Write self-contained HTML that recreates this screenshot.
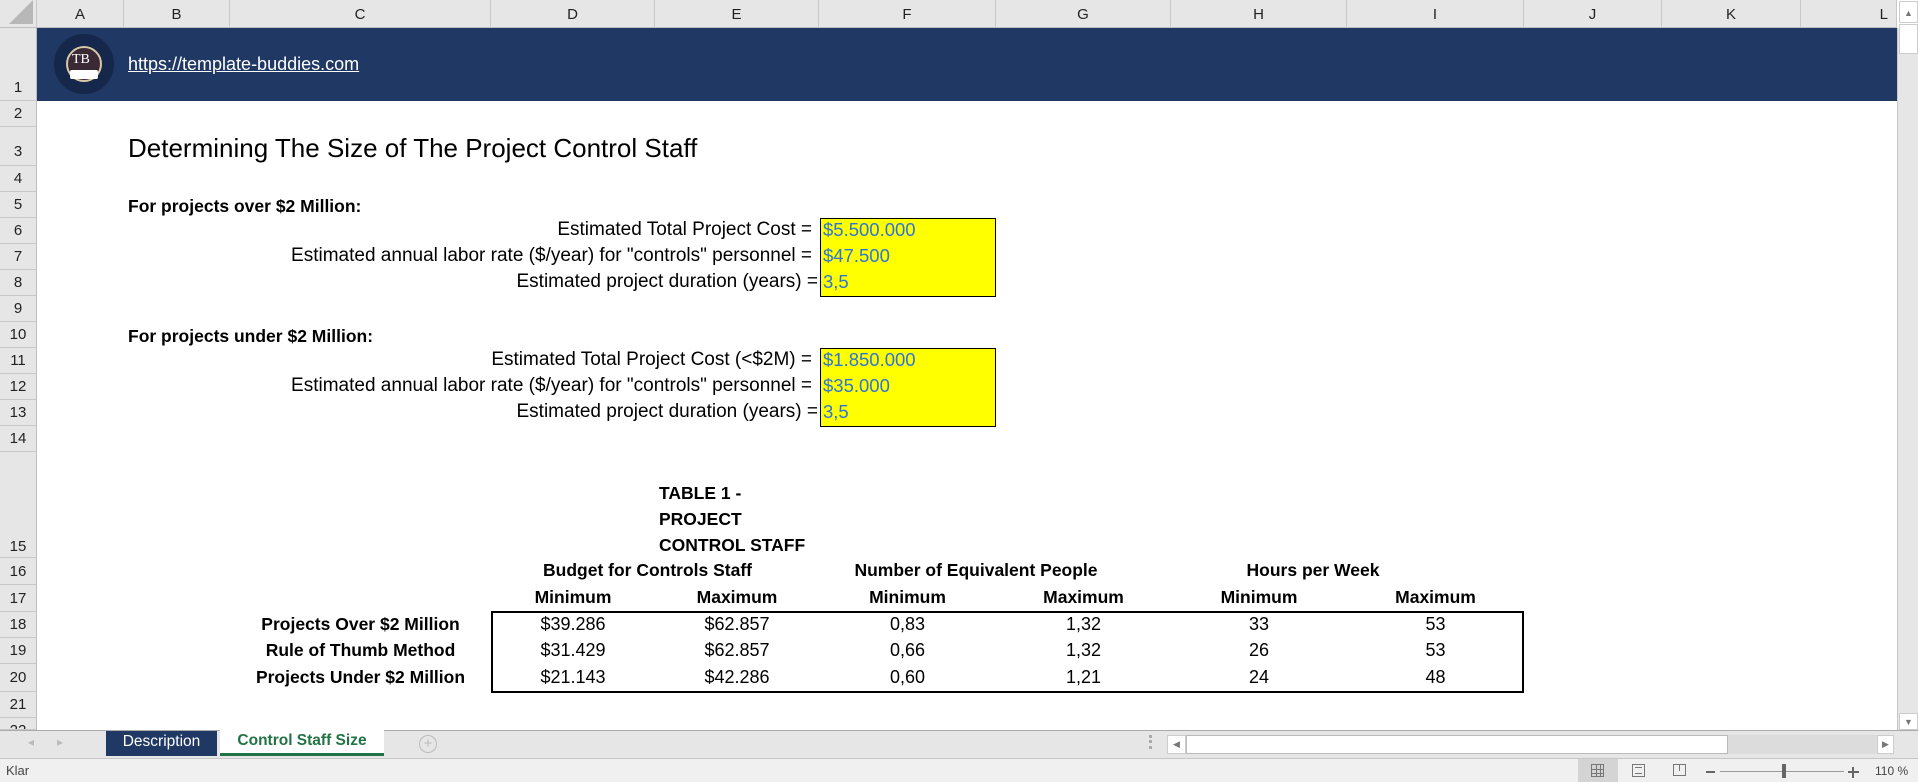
<!DOCTYPE html>
<html><head><meta charset="utf-8"><style>
*{margin:0;padding:0;box-sizing:border-box}
body{width:1918px;height:782px;overflow:hidden;background:#fff;font-family:"Liberation Sans",Arial,sans-serif;position:relative;color:#000}
.a{position:absolute;white-space:nowrap}
.ch{position:absolute;top:0;height:28px;background:#e6e6e6;border-right:1px solid #c8c8c8;border-bottom:1px solid #bdbdbd;font-size:15px;text-align:center;line-height:30px;color:#222}
.rh{position:absolute;left:0;width:37px;background:#e6e6e6;border-bottom:1px solid #c8c8c8;border-right:1px solid #bdbdbd;font-size:15px;text-align:center;color:#222}
.t{font-size:19px;line-height:26px;height:26px}
.r{text-align:right}
.b{font-weight:bold;font-size:17.5px}
.c{text-align:center;position:absolute;white-space:nowrap;font-size:18px;line-height:26px;height:26px}
.c.b{font-size:17.5px}
.v{color:#2f75d6;font-size:18.5px;line-height:26px}
</style></head><body>
<div class="ch" style="left:0;width:37px"><div style="position:absolute;right:3px;bottom:3px;width:0;height:0;border-left:24px solid transparent;border-bottom:24px solid #b8b8b8"></div></div>
<div class="ch" style="left:37px;width:87px">A</div>
<div class="ch" style="left:124px;width:106px">B</div>
<div class="ch" style="left:230px;width:261px">C</div>
<div class="ch" style="left:491px;width:164px">D</div>
<div class="ch" style="left:655px;width:164px">E</div>
<div class="ch" style="left:819px;width:177px">F</div>
<div class="ch" style="left:996px;width:175px">G</div>
<div class="ch" style="left:1171px;width:176px">H</div>
<div class="ch" style="left:1347px;width:177px">I</div>
<div class="ch" style="left:1524px;width:138px">J</div>
<div class="ch" style="left:1662px;width:139px">K</div>
<div class="ch" style="left:1801px;width:96px;text-align:right;padding-right:8px">L</div>
<div class="rh" style="top:28px;height:73px;line-height:120px">1</div>
<div class="rh" style="top:101px;height:26px;line-height:26px">2</div>
<div class="rh" style="top:127px;height:39px;line-height:50px">3</div>
<div class="rh" style="top:166px;height:26px;line-height:26px">4</div>
<div class="rh" style="top:192px;height:26px;line-height:26px">5</div>
<div class="rh" style="top:218px;height:26px;line-height:26px">6</div>
<div class="rh" style="top:244px;height:26px;line-height:26px">7</div>
<div class="rh" style="top:270px;height:26px;line-height:26px">8</div>
<div class="rh" style="top:296px;height:26px;line-height:26px">9</div>
<div class="rh" style="top:322px;height:26px;line-height:26px">10</div>
<div class="rh" style="top:348px;height:26px;line-height:26px">11</div>
<div class="rh" style="top:374px;height:26px;line-height:26px">12</div>
<div class="rh" style="top:400px;height:26px;line-height:26px">13</div>
<div class="rh" style="top:426px;height:26px;line-height:26px">14</div>
<div class="rh" style="top:452px;height:106px;line-height:190px">15</div>
<div class="rh" style="top:558px;height:27px;line-height:27px">16</div>
<div class="rh" style="top:585px;height:27px;line-height:27px">17</div>
<div class="rh" style="top:612px;height:26px;line-height:26px">18</div>
<div class="rh" style="top:638px;height:26px;line-height:26px">19</div>
<div class="rh" style="top:664px;height:28px;line-height:28px">20</div>
<div class="rh" style="top:692px;height:26px;line-height:26px">21</div>
<div class="rh" style="top:718px;height:12px;line-height:26px;overflow:hidden">22</div>
<div class="a" style="left:37px;top:28px;width:1860px;height:73px;background:#203864"></div>
<div class="a" style="left:54px;top:34px;width:60px;height:60px;border-radius:50%;background:#15274a"></div>
<div class="a" style="left:66px;top:46px;width:36px;height:36px;border-radius:50%;background:#3a2a35;border:2px solid #d8c8a8"></div>
<div class="a" style="left:72px;top:52px;color:#fff;font-size:14px;font-family:'Liberation Serif',serif">TB</div>
<div class="a" style="left:70px;top:70px;width:28px;height:9px;background:#fff;border-radius:2px"></div>
<div class="a" style="left:128px;top:54px;color:#fff;font-size:18px;text-decoration:underline">https://template-buddies.com</div>
<div class="a" style="left:128px;top:133px;font-size:26px">Determining The Size of The Project Control Staff</div>
<div class="a t b" style="left:128px;top:193px">For projects over $2 Million:</div>
<div class="a t b" style="left:128px;top:323px">For projects under $2 Million:</div>
<div class="a t r" style="right:1106px;top:217px">Estimated Total Project Cost =</div>
<div class="a t r" style="right:1106px;top:243px">Estimated annual labor rate ($/year) for "controls" personnel =</div>
<div class="a t r" style="right:1100px;top:269px">Estimated project duration (years) =</div>
<div class="a t r" style="right:1106px;top:347px">Estimated Total Project Cost (&lt;$2M) =</div>
<div class="a t r" style="right:1106px;top:373px">Estimated annual labor rate ($/year) for "controls" personnel =</div>
<div class="a t r" style="right:1100px;top:399px">Estimated project duration (years) =</div>
<div class="a" style="left:820px;top:218px;width:176px;height:79px;background:#ffff00;border:1px solid #000"></div>
<div class="a" style="left:820px;top:348px;width:176px;height:79px;background:#ffff00;border:1px solid #000"></div>
<div class="a v" style="left:823px;top:217px">$5.500.000</div>
<div class="a v" style="left:823px;top:243px">$47.500</div>
<div class="a v" style="left:823px;top:269px">3,5</div>
<div class="a v" style="left:823px;top:347px">$1.850.000</div>
<div class="a v" style="left:823px;top:373px">$35.000</div>
<div class="a v" style="left:823px;top:399px">3,5</div>
<div class="a b" style="left:659px;top:480px;line-height:26px">TABLE 1 -<br>PROJECT<br>CONTROL STAFF</div>
<div class="c b" style="left:543px;width:200px;top:557px">Budget for Controls Staff</div>
<div class="c b" style="left:826px;width:300px;top:557px">Number of Equivalent People</div>
<div class="c b" style="left:1213px;width:200px;top:557px">Hours per Week</div>
<div class="c b" style="left:491px;width:164px;top:584px">Minimum</div>
<div class="c b" style="left:655px;width:164px;top:584px">Maximum</div>
<div class="c b" style="left:819px;width:177px;top:584px">Minimum</div>
<div class="c b" style="left:996px;width:175px;top:584px">Maximum</div>
<div class="c b" style="left:1171px;width:176px;top:584px">Minimum</div>
<div class="c b" style="left:1347px;width:177px;top:584px">Maximum</div>
<div class="c b" style="left:230px;width:261px;top:611px">Projects Over $2 Million</div>
<div class="c b" style="left:230px;width:261px;top:637px">Rule of Thumb Method</div>
<div class="c b" style="left:230px;width:261px;top:664px">Projects Under $2 Million</div>
<div class="a" style="left:491px;top:611px;width:1033px;height:82px;border:2px solid #000"></div>
<div class="c" style="left:491px;width:164px;top:611px">$39.286</div>
<div class="c" style="left:655px;width:164px;top:611px">$62.857</div>
<div class="c" style="left:819px;width:177px;top:611px">0,83</div>
<div class="c" style="left:996px;width:175px;top:611px">1,32</div>
<div class="c" style="left:1171px;width:176px;top:611px">33</div>
<div class="c" style="left:1347px;width:177px;top:611px">53</div>
<div class="c" style="left:491px;width:164px;top:637px">$31.429</div>
<div class="c" style="left:655px;width:164px;top:637px">$62.857</div>
<div class="c" style="left:819px;width:177px;top:637px">0,66</div>
<div class="c" style="left:996px;width:175px;top:637px">1,32</div>
<div class="c" style="left:1171px;width:176px;top:637px">26</div>
<div class="c" style="left:1347px;width:177px;top:637px">53</div>
<div class="c" style="left:491px;width:164px;top:664px">$21.143</div>
<div class="c" style="left:655px;width:164px;top:664px">$42.286</div>
<div class="c" style="left:819px;width:177px;top:664px">0,60</div>
<div class="c" style="left:996px;width:175px;top:664px">1,21</div>
<div class="c" style="left:1171px;width:176px;top:664px">24</div>
<div class="c" style="left:1347px;width:177px;top:664px">48</div>
<div class="a" style="left:1897px;top:28px;width:21px;height:702px;background:#e6e6e6;border-left:1px solid #c8c8c8"></div>
<div class="a" style="left:1899px;top:1px;width:19px;height:22px;background:#fff;border:1px solid #ccc;color:#777;font-size:9px;text-align:center;line-height:22px">▲</div>
<div class="a" style="left:1899px;top:24px;width:19px;height:30px;background:#fff;border:1px solid #ccc"></div>
<div class="a" style="left:1899px;top:713px;width:19px;height:17px;background:#fff;border:1px solid #ccc;color:#777;font-size:9px;text-align:center;line-height:17px">▼</div>
<div class="a" style="left:0;top:730px;width:1918px;height:29px;background:#e6e6e6;border-top:1px solid #aaa;border-bottom:1px solid #c6c6c6"></div>
<div class="a" style="left:28px;top:735px;color:#bbb;font-size:12px">◂</div>
<div class="a" style="left:57px;top:735px;color:#bbb;font-size:12px">▸</div>
<div class="a" style="left:106px;top:731px;width:111px;height:25px;background:#203864;color:#fff;font-size:15.5px;text-align:center;line-height:22px">Description</div>
<div class="a" style="left:220px;top:730px;width:164px;height:26px;background:#fff;border-bottom:3px solid #217346;color:#217346;font-weight:bold;font-size:15.5px;text-align:center;line-height:22px">Control Staff Size</div>
<div class="a" style="left:419px;top:735px;width:18px;height:18px;border:1px solid #bbb;border-radius:50%;color:#bbb;font-size:15px;text-align:center;line-height:16px">+</div>
<div class="a" style="left:1149px;top:735px;width:3px;height:14px;border-left:3px dotted #aaa"></div>
<div class="a" style="left:1167px;top:735px;width:727px;height:19px;background:#dcdcdc"></div>
<div class="a" style="left:1167px;top:735px;width:19px;height:19px;background:#fff;border:1px solid #ccc;color:#777;font-size:9px;text-align:center;line-height:17px">◀</div>
<div class="a" style="left:1186px;top:735px;width:542px;height:19px;background:#fff;border:1px solid #bbb"></div>
<div class="a" style="left:1877px;top:735px;width:17px;height:19px;background:#fff;border:1px solid #ccc;color:#777;font-size:9px;text-align:center;line-height:17px">▶</div>
<div class="a" style="left:0;top:759px;width:1918px;height:23px;background:#f0f0f0"></div>
<div class="a" style="left:6px;top:763px;font-size:13px;color:#444">Klar</div>
<div class="a" style="left:1578px;top:759px;width:40px;height:23px;background:#d4d4d4"></div>
<div class="a" style="left:1591px;top:764px;width:13px;height:13px;border:1px solid #777;background:linear-gradient(#777,#777) 4px 0/1px 100% no-repeat,linear-gradient(#777,#777) 8px 0/1px 100% no-repeat,linear-gradient(#777,#777) 0 4px/100% 1px no-repeat,linear-gradient(#777,#777) 0 8px/100% 1px no-repeat"></div>
<div class="a" style="left:1632px;top:764px;width:13px;height:13px;border:1px solid #777"><div style="margin:2px;height:7px;border-top:1px solid #777;border-bottom:1px solid #777"></div></div>
<div class="a" style="left:1673px;top:764px;width:13px;height:12px;border:1px solid #777"><div style="margin-left:5px;width:1px;height:6px;background:#777"></div></div>
<div class="a" style="left:1706px;top:771px;width:9px;height:2px;background:#666"></div>
<div class="a" style="left:1720px;top:771px;width:124px;height:1px;background:#999"></div>
<div class="a" style="left:1782px;top:764px;width:4px;height:14px;background:#666"></div>
<div class="a" style="left:1848px;top:771px;width:11px;height:2px;background:#666"></div>
<div class="a" style="left:1852px;top:767px;width:2px;height:11px;background:#666"></div>
<div class="a" style="left:1875px;top:764px;font-size:12px;color:#444">110 %</div>
</body></html>
